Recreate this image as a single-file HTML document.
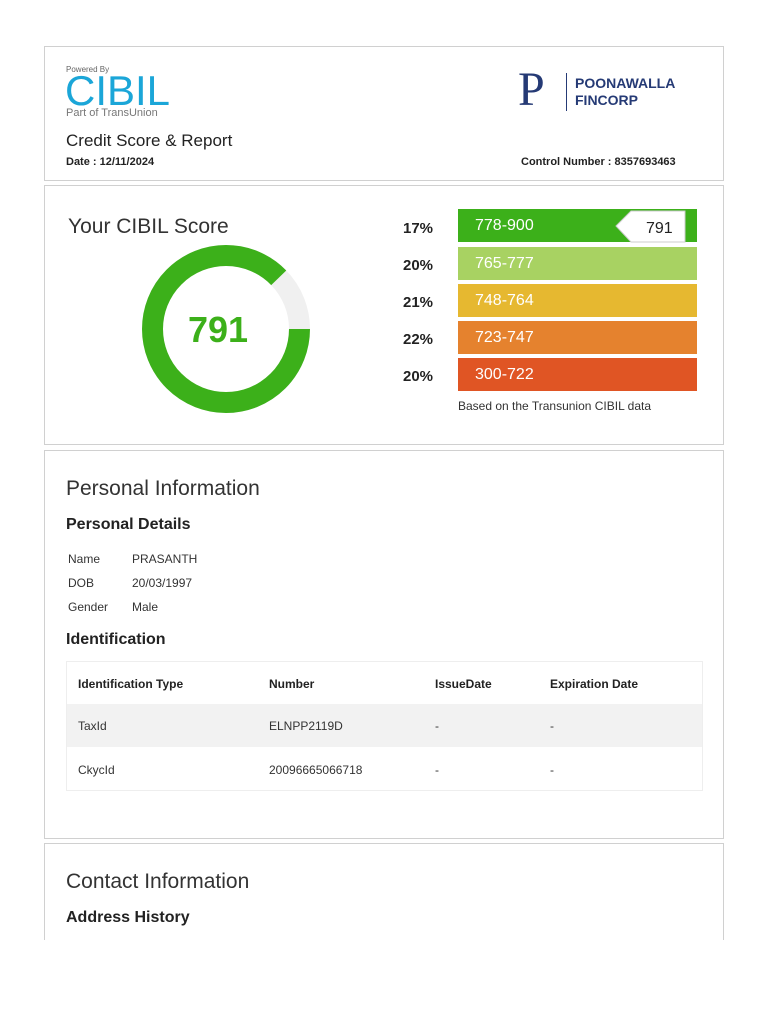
<!DOCTYPE html>
<html><head><meta charset="utf-8"><style>
*{margin:0;padding:0;box-sizing:border-box}
html,body{width:768px;height:1024px;overflow:hidden}
body{background:#fff;position:relative;font-family:"Liberation Sans",sans-serif;color:#222}
.a{position:absolute;white-space:nowrap}
.card{position:absolute;left:44px;width:680px;border:1px solid #d0d0d0;background:#fff}
.bar{position:absolute;left:458px;width:239px;height:33px;color:#fff;font-size:16px;line-height:33px;padding-left:17px}
.pct{position:absolute;left:403px;font-size:15px;font-weight:bold;color:#222}
.lbl{font-size:12px;color:#333}
</style></head><body>
<div class="card" style="top:46px;height:135px"></div>
<div class="card" style="top:185px;height:260px"></div>
<div class="card" style="top:450px;height:389px"></div>
<div class="card" style="top:843px;height:97px;border-bottom:none"></div>

<div class="a" style="left:66px;top:65px;font-size:8px;color:#666">Powered By</div>
<div class="a" style="left:65px;top:70px;font-size:42px;line-height:42px;color:#1ba6d8">CIBIL</div>
<div class="a" style="left:66px;top:107px;font-size:11px;color:#777">Part of TransUnion</div>
<div class="a" style="left:66px;top:131px;font-size:17px;color:#222">Credit Score &amp; Report</div>
<div class="a" style="left:66px;top:156px;font-size:11px;font-weight:bold;color:#222">Date : 12/11/2024</div>
<div class="a" style="left:521px;top:156px;font-size:11px;font-weight:bold;color:#222">Control Number : 8357693463</div>
<div class="a" style="left:518px;top:62px;font-family:'Liberation Serif',serif;font-size:48px;color:#253a75;line-height:56px">P</div>
<div class="a" style="left:566px;top:73px;width:1px;height:38px;background:#253a75"></div>
<div class="a" style="left:575px;top:75px;font-size:14px;font-weight:bold;color:#253a75;line-height:17px">POONAWALLA<br>FINCORP</div>

<div class="a" style="left:68px;top:215px;font-size:21px;color:#333">Your CIBIL Score</div>
<svg class="a" style="left:130px;top:233px" width="192" height="192" viewBox="0 0 192 192">
<circle cx="96" cy="96" r="73.5" fill="none" stroke="#f0f0f0" stroke-width="21"/>
<circle cx="96" cy="96" r="73.5" fill="none" stroke="#3cb01a" stroke-width="21" stroke-dasharray="405 1000"/>
<text x="88" y="109" text-anchor="middle" font-family="Liberation Sans" font-weight="bold" font-size="36" fill="#3cb01a">791</text>
</svg>

<div class="pct" style="top:220px">17%</div>
<div class="pct" style="top:257px">20%</div>
<div class="pct" style="top:294px">21%</div>
<div class="pct" style="top:331px">22%</div>
<div class="pct" style="top:368px">20%</div>
<div class="bar" style="top:209px;background:#3cb01a">778-900</div>
<div class="bar" style="top:247px;background:#a8d262">765-777</div>
<div class="bar" style="top:284px;background:#e6b830">748-764</div>
<div class="bar" style="top:321px;background:#e5822e">723-747</div>
<div class="bar" style="top:358px;background:#e05524">300-722</div>
<svg class="a" style="left:615px;top:210px" width="72" height="33"><polygon points="1,16 16,1 70,1 70,32 16,32" fill="#fff" stroke="#ccc"/><text x="31" y="23" font-family="Liberation Sans" font-size="16" fill="#222">791</text></svg>
<div class="a" style="left:458px;top:399px;font-size:12px;color:#333">Based on the Transunion CIBIL data</div>

<div class="a" style="left:66px;top:477px;font-size:21px;color:#333">Personal Information</div>
<div class="a" style="left:66px;top:516px;font-size:16px;font-weight:bold">Personal Details</div>
<div class="a lbl" style="left:68px;top:552px">Name</div><div class="a lbl" style="left:132px;top:552px">PRASANTH</div>
<div class="a lbl" style="left:68px;top:576px">DOB</div><div class="a lbl" style="left:132px;top:576px">20/03/1997</div>
<div class="a lbl" style="left:68px;top:600px">Gender</div><div class="a lbl" style="left:132px;top:600px">Male</div>
<div class="a" style="left:66px;top:631px;font-size:16px;font-weight:bold">Identification</div>
<div class="a" style="left:66px;top:661px;width:637px;height:130px;border:1px solid #eee"></div>
<div class="a" style="left:67px;top:704px;width:635px;height:43px;background:#f2f2f2"></div>
<div class="a" style="left:78px;top:677px;font-size:12px;font-weight:bold">Identification Type</div>
<div class="a" style="left:269px;top:677px;font-size:12px;font-weight:bold">Number</div>
<div class="a" style="left:435px;top:677px;font-size:12px;font-weight:bold">IssueDate</div>
<div class="a" style="left:550px;top:677px;font-size:12px;font-weight:bold">Expiration Date</div>
<div class="a lbl" style="left:78px;top:719px">TaxId</div><div class="a lbl" style="left:269px;top:719px">ELNPP2119D</div><div class="a lbl" style="left:435px;top:719px">-</div><div class="a lbl" style="left:550px;top:719px">-</div>
<div class="a lbl" style="left:78px;top:763px">CkycId</div><div class="a lbl" style="left:269px;top:763px">20096665066718</div><div class="a lbl" style="left:435px;top:763px">-</div><div class="a lbl" style="left:550px;top:763px">-</div>

<div class="a" style="left:66px;top:870px;font-size:21px;color:#333">Contact Information</div>
<div class="a" style="left:66px;top:909px;font-size:16px;font-weight:bold">Address History</div>
</body></html>
